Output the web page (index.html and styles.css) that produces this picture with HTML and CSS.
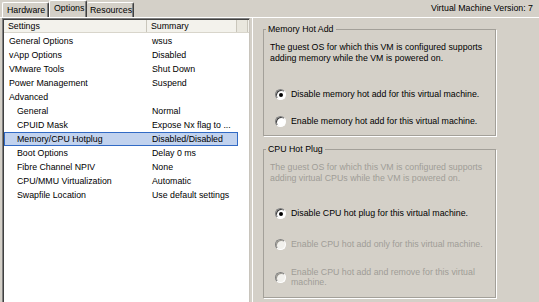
FILE: index.html
```html
<!DOCTYPE html>
<html>
<head>
<meta charset="utf-8">
<link rel="stylesheet" href="styles.css">
</head>
<body>
<div class="window">
  <div class="topbar">
    <div class="tabs">
      <div class="tab tab-hw">Hardware</div>
      <div class="tab tab-opt active">Options</div>
      <div class="tab tab-res">Resources</div>
    </div>
    <div class="version">Virtual Machine Version: 7</div>
  </div>
  <div class="main">
    <div class="listbox">
      <div class="lhead">
        <div class="hc c1">Settings</div>
        <div class="hc c2">Summary</div>
        <div class="hc c3"></div>
      </div>
      <div class="row"><span class="c1">General Options</span><span class="c2">wsus</span></div>
      <div class="row"><span class="c1">vApp Options</span><span class="c2">Disabled</span></div>
      <div class="row"><span class="c1">VMware Tools</span><span class="c2">Shut Down</span></div>
      <div class="row"><span class="c1">Power Management</span><span class="c2">Suspend</span></div>
      <div class="row"><span class="c1">Advanced</span><span class="c2"></span></div>
      <div class="row sub"><span class="c1">General</span><span class="c2">Normal</span></div>
      <div class="row sub"><span class="c1">CPUID Mask</span><span class="c2">Expose Nx flag to ...</span></div>
      <div class="row sub selected"><span class="c1">Memory/CPU Hotplug</span><span class="c2">Disabled/Disabled</span></div>
      <div class="row sub"><span class="c1">Boot Options</span><span class="c2">Delay 0 ms</span></div>
      <div class="row sub"><span class="c1">Fibre Channel NPIV</span><span class="c2">None</span></div>
      <div class="row sub"><span class="c1">CPU/MMU Virtualization</span><span class="c2">Automatic</span></div>
      <div class="row sub"><span class="c1">Swapfile Location</span><span class="c2">Use default settings</span></div>
    </div>
    <div class="pane">
      <fieldset class="group group-mem">
        <legend>Memory Hot Add</legend>
        <p class="desc">The guest OS for which this VM is configured supports<br>adding memory while the VM is powered on.</p>
        <div class="opt opt-m1"><span class="radio checked"></span><span class="opt-text">Disable memory hot add for this virtual machine.</span></div>
        <div class="opt opt-m2"><span class="radio"></span><span class="opt-text">Enable memory hot add for this virtual machine.</span></div>
      </fieldset>
      <fieldset class="group group-cpu">
        <legend>CPU Hot Plug</legend>
        <p class="desc disabled">The guest OS for which this VM is configured supports<br>adding virtual CPUs while the VM is powered on.</p>
        <div class="opt opt-c1"><span class="radio checked"></span><span class="opt-text">Disable CPU hot plug for this virtual machine.</span></div>
        <div class="opt opt-c2 disabled"><span class="radio off"></span><span class="opt-text">Enable CPU hot add only for this virtual machine.</span></div>
        <div class="opt opt-c3 disabled"><span class="radio off"></span><span class="opt-text">Enable CPU hot add and remove for this virtual<br>machine.</span></div>
      </fieldset>
    </div>
  </div>
</div>
</body>
</html>
```

FILE: styles.css
```css
html, body {
  margin: 0;
  padding: 0;
}
body {
  background: #d4d0c8;
  font-family: "Liberation Sans", Arial, sans-serif;
  font-size: 8.8px;
  color: #000;
}
.window {
  width: 539px;
  height: 302px;
  overflow: hidden;
  display: flex;
  flex-direction: column;
}
.topbar {
  height: 17px;
  display: flex;
  justify-content: space-between;
  align-items: flex-end;
  flex: none;
}
.tabs {
  display: flex;
  align-items: flex-end;
  padding-left: 2px;
  height: 17px;
}
.tab {
  box-sizing: border-box;
  height: 15px;
  line-height: 14px;
  padding-left: 4px;
  border-top: 1px solid #fff;
  border-left: 1px solid #fff;
  border-right: 1px solid #404040;
  box-shadow: inset -1px 0 0 #808080;
  border-radius: 2px 2px 0 0;
}
.tab-hw { width: 47px; }
.tab-opt { width: 38px; }
.tab-res { width: 47px; border-left: none; padding-left: 3px; }
.tab.active {
  height: 17px;
  line-height: 15px;
  border-right: 1px solid #404040;
}
.version {
  height: 17px;
  line-height: 17px;
  padding-right: 6px;
}
.main {
  flex: 1;
  display: flex;
  border-top: 1px solid #fff;
  min-height: 0;
}
.listbox {
  box-sizing: border-box;
  margin-left: 2px;
  width: 248px;
  background: #fff;
  border-left: 1px solid #808080;
  border-top: 1px solid #808080;
  border-right: 1px solid #c8c4bc;
  box-shadow: inset 1px 1px 0 #404040;
  padding-left: 1px;
  padding-top: 1px;
}
.lhead {
  display: flex;
  height: 13px;
  line-height: 13px;
  background: #f3f2ec;
  border-bottom: 1px solid #d8d5cb;
  box-sizing: border-box;
}
.hc {
  box-sizing: border-box;
  border-right: 1px solid #c9c6bb;
}
.lhead .c1 { width: 143px; padding-left: 4px; }
.lhead .c2 { width: 90px; padding-left: 4px; }
.lhead .c3 { width: 11px; background: #e9e7de; }
.row {
  display: flex;
  height: 14px;
  line-height: 14px;
  width: 234px;
  box-sizing: border-box;
  white-space: nowrap;
}
.lhead + .row { margin-top: 1px; }
.row .c1 {
  width: 143px;
  padding-left: 5px;
  box-sizing: border-box;
}
.row.sub .c1 { padding-left: 13px; }
.row .c2 {
  width: 91px;
  padding-left: 5px;
  box-sizing: border-box;
  overflow: hidden;
}
.row.selected {
  background: #c1d2ee;
  box-shadow: inset 0 0 0 1px #316ac5;
}
.pane {
  flex: 1;
  margin-left: 2px;
  border-left: 1px solid #fff;
  padding: 6px 0 0 10px;
}
.group {
  box-sizing: border-box;
  width: 233px;
  margin: 0;
  padding: 0 0 0 6px;
  border: 1px solid #a3a099;
  box-shadow: 1px 1px 0 #fff;
  min-width: 0;
}
.group legend {
  padding: 0 2px;
  margin-left: -4px;
  line-height: 11px;
}
.desc {
  margin: 7px 0 0 0;
  line-height: 11px;
  white-space: nowrap;
}
.disabled, .desc.disabled {
  color: #9f9d97;
}
.opt {
  display: flex;
  align-items: center;
  line-height: 14px;
  padding-left: 5px;
}
.opt-text { margin-left: 5px; }
.opt-m1 { margin-top: 23px; }
.opt-m2 { margin-top: 13px; margin-bottom: 7px; }
.group-cpu { margin-top: 8px; }
.group-cpu .desc { margin-top: 7px; }
.opt-c1 { margin-top: 22px; }
.opt-c2 { margin-top: 17px; }
.opt-c3 { margin-top: 16px; margin-bottom: 10px; line-height: 10px; }
.radio {
  box-sizing: border-box;
  width: 11px;
  height: 11px;
  flex: none;
  border-radius: 50%;
  background: #fff;
  border: 1px solid;
  border-color: #808080 #ffffff #ffffff #808080;
  box-shadow: inset 1px 1px 0 #404040;
  position: relative;
}
.radio.off {
  background: #f2f1ed;
  box-shadow: inset 1px 1px 0 #9a978f;
}
.radio.checked::after {
  content: "";
  position: absolute;
  left: 3px;
  top: 3px;
  width: 4px;
  height: 4px;
  border-radius: 50%;
  background: #000;
}
```
